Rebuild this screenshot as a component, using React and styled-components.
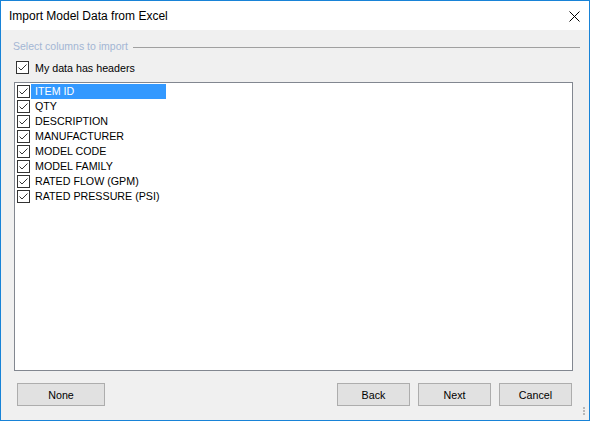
import React from "react";
import styled, { createGlobalStyle } from "styled-components";

const Global = createGlobalStyle`
  html, body { margin: 0; padding: 0; background: #ffffff; }
  * { box-sizing: border-box; }
`;

const Window = styled.div`
  position: relative;
  width: 590px;
  height: 421px;
  border: 1px solid #1883d7;
  display: flex;
  flex-direction: column;
  background: #f0f0f0;
  font-family: "Liberation Sans", Arial, sans-serif;
  overflow: hidden;
`;

const TitleBar = styled.div`
  height: 29px;
  flex: 0 0 29px;
  background: #ffffff;
  display: flex;
  align-items: center;
  justify-content: space-between;
  padding: 0 9px 0 8px;
`;

const Title = styled.span`
  font-size: 12px;
  color: #000000;
  padding-top: 1px;
`;

const CloseGlyph = styled.svg`
  width: 11px;
  height: 11px;
  display: block;
  margin-top: 1px;
`;

const Body = styled.div`
  flex: 1;
  display: flex;
  flex-direction: column;
  padding: 10px 0 14px 0;
`;

const GroupHeader = styled.div`
  height: 13px;
  display: flex;
  align-items: center;
  gap: 5px;
  padding: 0 9px 0 12px;
`;

const GroupLabel = styled.span`
  font-size: 10.5px;
  color: #a3b6d4;
  white-space: nowrap;
  line-height: 13px;
`;

const GroupLine = styled.div`
  flex: 1;
  height: 1px;
  background: #a0a0a0;
  margin-top: 1px;
`;

const CheckRow = styled.label`
  margin: 7px 0 0 15px;
  height: 15px;
  display: flex;
  align-items: center;
  gap: 6px;
  font-size: 10.7px;
  color: #000;
`;

const List = styled.div`
  margin: 7px 16px 0 13px;
  height: 289px;
  background: #ffffff;
  border: 1px solid #828790;
  padding: 1px 0 0 1px;
  display: flex;
  flex-direction: column;
`;

const Item = styled.div`
  height: 15px;
  display: flex;
  align-items: center;
`;

const BoxSlot = styled.div`
  width: 15px;
  padding-left: 1px;
  display: flex;
  align-items: center;
`;

const ItemText = styled.span`
  width: 135px;
  height: 15px;
  line-height: 15px;
  padding-left: 4px;
  font-size: 10.7px;
  white-space: nowrap;
  color: ${(p) => (p.$selected ? "#ffffff" : "#000000")};
  background: ${(p) => (p.$selected ? "#3399ff" : "transparent")};
`;

const ButtonRow = styled.div`
  margin: 12px 17px 0 16px;
  display: flex;
  align-items: center;
  gap: 8px;
`;

const Button = styled.button`
  width: ${(p) => p.$w}px;
  height: 23px;
  background: #e1e1e1;
  border: 1px solid #adadad;
  font-family: "Liberation Sans", Arial, sans-serif;
  font-size: 10.7px;
  color: #000;
  padding: 0;
  margin: 0;
  ${(p) => (p.$push ? "margin-left: auto;" : "")}
`;

const Grip = styled.svg`
  position: absolute;
  right: 2px;
  bottom: 2px;
  width: 12px;
  height: 12px;
`;

const Check = () => (
  <svg width="13" height="13" viewBox="0 0 13 13" style={{ display: "block" }}>
    <rect x="0.5" y="0.5" width="12" height="12" fill="#ffffff" stroke="#333333" />
    <path d="M2.5 6.5 L5 9 L10.5 3.5" fill="none" stroke="#333333" strokeWidth="1" />
  </svg>
);

const columns = [
  "ITEM ID",
  "QTY",
  "DESCRIPTION",
  "MANUFACTURER",
  "MODEL CODE",
  "MODEL FAMILY",
  "RATED FLOW (GPM)",
  "RATED PRESSURE (PSI)",
];

export default function App() {
  return (
    <>
      <Global />
      <Window>
        <TitleBar>
          <Title>Import Model Data from Excel</Title>
          <CloseGlyph viewBox="0 0 11 11">
            <path d="M0.5 0.5 L10.5 10.5 M10.5 0.5 L0.5 10.5" stroke="#000" strokeWidth="1" />
          </CloseGlyph>
        </TitleBar>
        <Body>
          <GroupHeader>
            <GroupLabel>Select columns to import</GroupLabel>
            <GroupLine />
          </GroupHeader>
          <CheckRow>
            <Check />
            <span>My data has headers</span>
          </CheckRow>
          <List>
            {columns.map((c, i) => (
              <Item key={c}>
                <BoxSlot>
                  <Check />
                </BoxSlot>
                <ItemText $selected={i === 0}>{c}</ItemText>
              </Item>
            ))}
          </List>
          <ButtonRow>
            <Button $w={88}>None</Button>
            <Button $w={73} $push>Back</Button>
            <Button $w={73}>Next</Button>
            <Button $w={73}>Cancel</Button>
          </ButtonRow>
        </Body>
        <Grip viewBox="0 0 12 12">
          <rect x="8" y="1" width="2" height="2" fill="#b8b8b8" />
          <rect x="8" y="4" width="2" height="2" fill="#b8b8b8" />
          <rect x="8" y="7" width="2" height="2" fill="#b8b8b8" />
        </Grip>
      </Window>
    </>
  );
}
